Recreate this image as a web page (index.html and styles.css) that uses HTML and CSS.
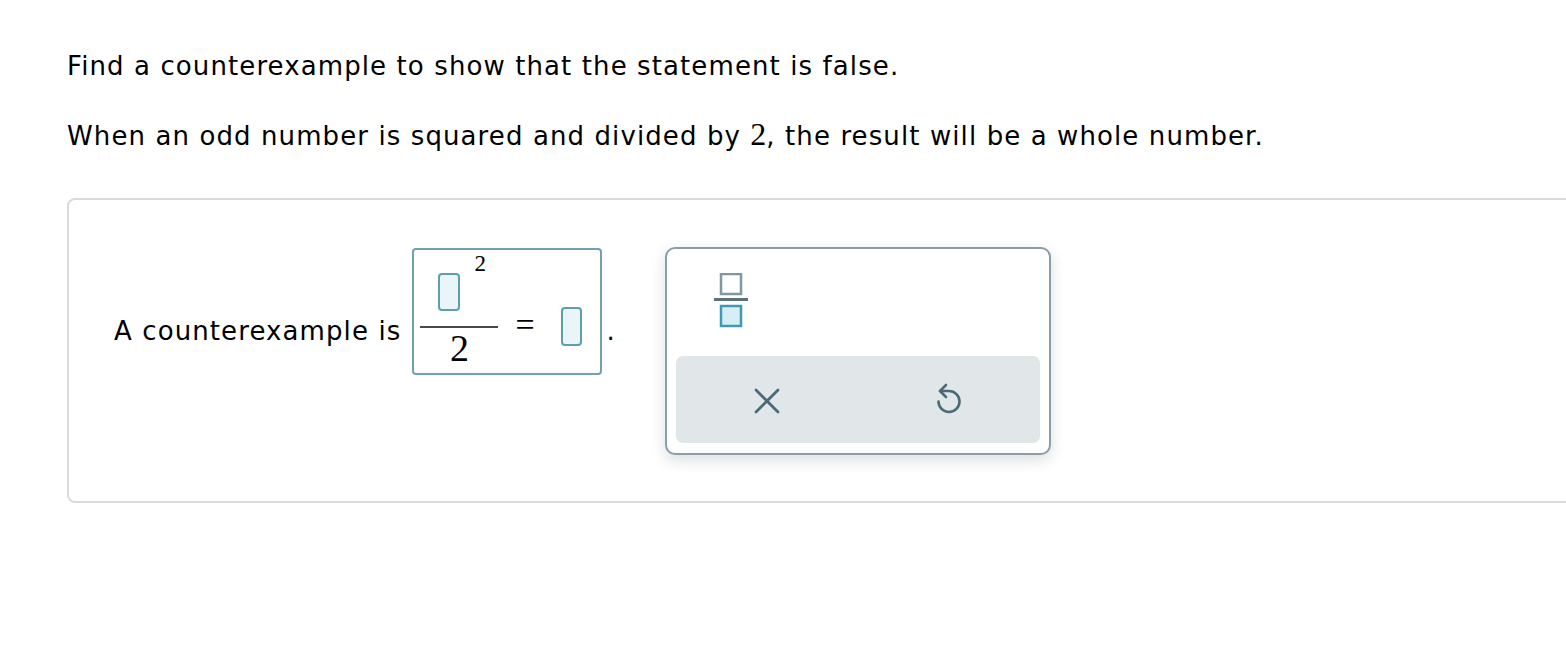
FILE: index.html
```html
<!DOCTYPE html>
<html>
<head>
<meta charset="utf-8">
<link rel="stylesheet" href="styles.css">
</head>
<body>
<div class="page">
  <p class="line line1">Find a counterexample to show that the statement is false.</p>
  <p class="line line2">When an odd number is squared and divided by <span class="mnum">2</span>, the result will be a whole number.</p>
  <div class="card">
    <div class="row">
      <span class="label">A counterexample is</span>
      <div class="answer">
        <div class="frac">
          <div class="num">
            <span class="slot slot-num"></span>
            <span class="sup">2</span>
          </div>
          <div class="bar"></div>
          <div class="den">2</div>
        </div>
        <span class="eq">=</span>
        <span class="slot slot-res"></span>
      </div>
      <span class="period">.</span>
      <div class="palette">
        <div class="tools">
          <svg class="fracicon" width="34" height="56" viewBox="0 0 34 56">
            <rect x="7" y="1" width="20" height="20" fill="#fff" stroke="#7f97a1" stroke-width="2.5"/>
            <rect x="0" y="25" width="34" height="3" fill="#5b717b"/>
            <rect x="7" y="33" width="20" height="20" fill="#d6eef4" stroke="#3f9bb3" stroke-width="2.5"/>
          </svg>
        </div>
        <div class="actions">
          <svg class="icon-x" width="26" height="26" viewBox="0 0 26 26">
            <path d="M2 2 L24 24 M24 2 L2 24" stroke="#4b6a77" stroke-width="2.8" stroke-linecap="round" fill="none"/>
          </svg>
          <svg class="icon-undo" width="28" height="36" viewBox="0 0 28 36">
            <path d="M4 12 H13 A10.5 10.5 0 1 1 2.5 22.5" stroke="#4b6a77" stroke-width="2.6" stroke-linecap="round" stroke-linejoin="round" fill="none"/>
            <path d="M10 6 L4 12 L10 18" stroke="#4b6a77" stroke-width="2.6" stroke-linecap="round" stroke-linejoin="round" fill="none"/>
          </svg>
        </div>
      </div>
    </div>
  </div>
</div>
</body>
</html>
```

FILE: styles.css
```css
html, body {
  margin: 0;
  padding: 0;
  background: #fff;
  overflow: hidden;
}
body {
  font-family: "DejaVu Sans", Verdana, sans-serif;
  color: #000;
}
.page {
  padding: 49px 0 0 67px;
}
.line {
  margin: 0;
  font-size: 26px;
  line-height: 34px;
  letter-spacing: 1.1px;
  white-space: nowrap;
}
.line2 {
  margin-top: 36px;
}
.mnum {
  font-family: "Liberation Serif", "Times New Roman", serif;
  font-size: 32px;
  line-height: 20px;
  letter-spacing: 0;
}
.card {
  margin-top: 45px;
  width: 1560px;
  height: 305px;
  border: 2px solid #d5dbdf;
  border-radius: 8px;
  box-sizing: border-box;
}
.row {
  display: flex;
  align-items: flex-start;
  padding: 48px 0 0 45px;
}
.label {
  font-size: 26px;
  line-height: 30px;
  letter-spacing: 1.1px;
  white-space: nowrap;
  margin-top: 68px;
  margin-right: 11px;
}
.answer {
  width: 190px;
  height: 127px;
  box-sizing: border-box;
  border: 2px solid #6fa1af;
  border-radius: 4px;
  display: flex;
  align-items: flex-start;
  padding: 0 0 0 6px;
}
.frac {
  width: 78px;
  display: flex;
  flex-direction: column;
  align-items: center;
}
.num {
  height: 76px;
  position: relative;
  width: 78px;
}
.slot {
  display: block;
  box-sizing: border-box;
  border: 2px solid #5e9fad;
  border-radius: 4px;
  background: #e9f5f9;
}
.slot-num {
  position: absolute;
  left: 18px;
  top: 23px;
  width: 22px;
  height: 38px;
}
.sup {
  position: absolute;
  left: 54px;
  top: 2px;
  font-family: "Liberation Serif", "Times New Roman", serif;
  font-size: 23px;
  line-height: 23px;
}
.bar {
  width: 78px;
  height: 2px;
  background: #4a4a4a;
}
.den {
  font-family: "Liberation Serif", "Times New Roman", serif;
  font-size: 38px;
  line-height: 40px;
}
.eq {
  font-family: "Liberation Serif", "Times New Roman", serif;
  font-size: 34px;
  line-height: 34px;
  margin: 58px 0 0 17px;
}
.slot-res {
  width: 21px;
  height: 39px;
  margin: 57px 0 0 26px;
}
.period {
  font-size: 26px;
  line-height: 30px;
  width: 8px;
  margin-top: 68px;
  margin-left: 4px;
}
.palette {
  margin-left: 51px;
  margin-top: -1px;
  width: 386px;
  height: 208px;
  box-sizing: border-box;
  border: 2px solid #8a9ea8;
  border-radius: 10px;
  background: #fff;
  box-shadow: 0 5px 14px 1px rgba(40, 60, 70, 0.15);
  padding: 24px 9px 10px 9px;
  display: flex;
  flex-direction: column;
}
.tools {
  height: 84px;
  padding-left: 38px;
}
.fracicon {
  display: block;
}
.actions {
  height: 88px;
  background: #e1e6e9;
  border-radius: 7px;
  display: flex;
  align-items: center;
}
.icon-x {
  margin-left: 78px;
  margin-top: 3px;
}
.icon-undo {
  margin-left: 156px;
  margin-top: -6px;
}
```
